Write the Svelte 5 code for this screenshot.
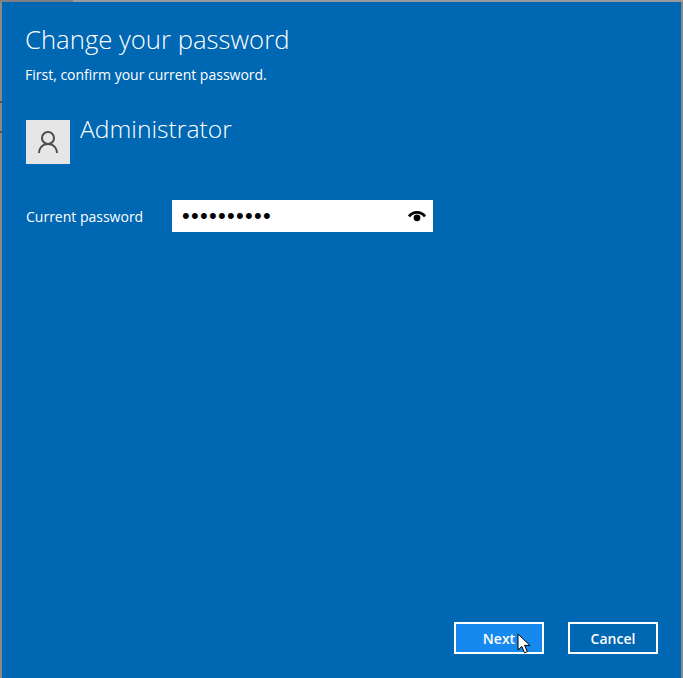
<script>
  let password = '••••••••••';
</script>

<div class="window">
  <div class="dialog">
    <div class="content">
      <h1>Change your password</h1>
      <p class="subtitle">First, confirm your current password.</p>

      <div class="account">
        <div class="avatar">
          <svg viewBox="0 0 24 24" width="24" height="24" fill="none" stroke="#4c4c4c" stroke-width="2">
            <circle cx="12" cy="8" r="6" />
            <path d="M3 23c0-5 3.500-9 9-9s9 4 9 9" />
          </svg>
        </div>
        <span class="name">Administrator</span>
      </div>

      <div class="field">
        <label for="pw">Current password</label>
        <div class="input">
          <input id="pw" type="text" value={password} readonly />
          <svg class="eye" viewBox="0 0 18 12" width="18" height="12">
            <path d="M1 6.500C3 3.500 6 2.300 9 2.300S15 3.500 17 6.500" fill="none" stroke="#000" stroke-width="2.800" />
            <circle cx="9" cy="7.800" r="3.400" fill="#000" />
          </svg>
        </div>
      </div>
    </div>

    <div class="footer">
      <button class="btn hover">Next</button>
      <button class="btn">Cancel</button>
      <svg class="cursor" viewBox="0 0 14 22" width="14" height="22">
        <path d="M1 1v16l3.800-3.600 2.700 6.400 2.800-1.200-2.700-6.200h5.400z" fill="#fff" stroke="#000" stroke-width="1" />
      </svg>
    </div>
  </div>
</div>

<style>
  :global(body) {
    background: #fff;
  }

  .window {
    width: 683px;
    height: 678px;
    box-sizing: border-box;
    padding: 2px 2px 0 2px;
    background:
      linear-gradient(#555, #555) 0 101px / 2px 2px no-repeat,
      linear-gradient(#555, #555) 0 131px / 2px 2px no-repeat,
      linear-gradient(to right, #808080 73px, #9a9a9a 73px) 0 0 / 100% 2px no-repeat,
      #8a8a8a;
    font-family: 'Open Sans', 'Noto Sans', sans-serif;
  }

  .dialog {
    height: 100%;
    background: #0067b3;
    color: #fff;
    display: flex;
    flex-direction: column;
    justify-content: space-between;
    position: relative;
  }

  .content {
    padding: 21px 0 0 23px;
  }

  h1 {
    margin: 0;
    font-size: 25.7px;
    line-height: 34px;
    font-weight: 300;
  }

  .subtitle {
    margin: 9px 0 0;
    font-size: 14px;
    line-height: 18px;
  }

  .account {
    display: flex;
    align-items: flex-start;
    gap: 10px;
    margin: 36px 0 0 1px;
  }

  .avatar {
    width: 44px;
    height: 44px;
    background: #e6e6e6;
    display: flex;
    align-items: center;
    justify-content: center;
  }

  .name {
    font-size: 24.7px;
    line-height: 18px;
    font-weight: 300;
  }

  .field {
    display: flex;
    align-items: center;
    margin: 36px 0 0 1px;
  }

  label {
    width: 146px;
    font-size: 14px;
  }

  .input {
    width: 261px;
    height: 32px;
    background: #fff;
    display: flex;
    align-items: center;
    padding: 0 7px 0 10px;
    box-sizing: border-box;
  }

  input {
    flex: 1;
    min-width: 0;
    border: none;
    outline: none;
    padding: 0;
    font-family: 'Liberation Sans', sans-serif;
    font-size: 22px;
    letter-spacing: 1.3px;
    color: #000;
    background: transparent;
  }

  .footer {
    display: flex;
    justify-content: flex-end;
    gap: 24px;
    padding: 0 23px 24px 0;
    position: relative;
  }

  .btn {
    width: 90px;
    height: 32px;
    box-sizing: border-box;
    border: 2px solid #fff;
    background: transparent;
    color: #fff;
    font-family: inherit;
    font-size: 14px;
    font-weight: 600;
    padding: 0;
  }

  .btn.hover {
    background: #1689ee;
  }

  .cursor {
    position: absolute;
    left: 515px;
    top: 11px;
  }
</style>
